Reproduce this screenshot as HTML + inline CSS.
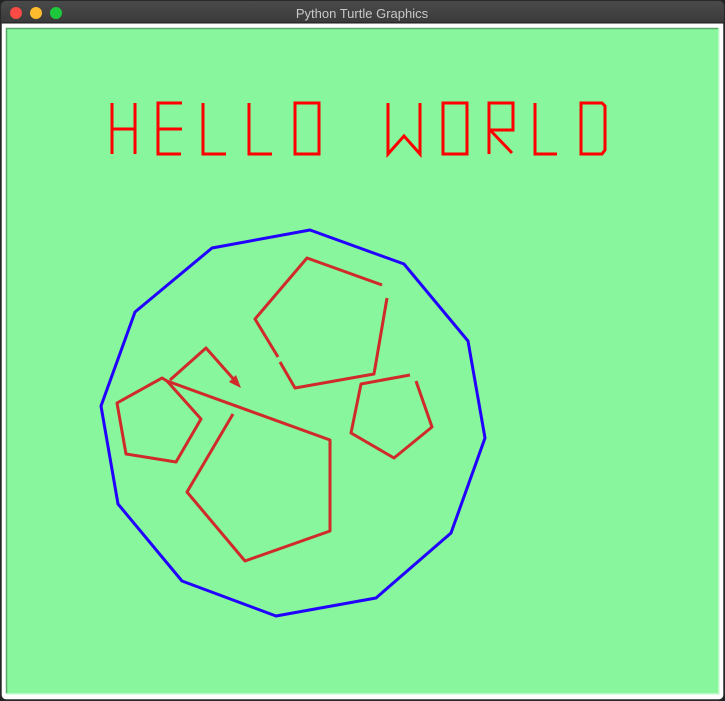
<!DOCTYPE html>
<html><head><style>
html,body{margin:0;padding:0;width:725px;height:701px;overflow:hidden;background:#1e2326;}
</style></head><body>
<svg width="725" height="701" viewBox="0 0 725 701" xmlns="http://www.w3.org/2000/svg">
<defs><linearGradient id="tb" x1="0" y1="0" x2="0" y2="1"><stop offset="0" stop-color="#4a4a4a"/><stop offset="1" stop-color="#3a3a3a"/></linearGradient></defs>
<rect x="1" y="1" width="723" height="699" rx="5" fill="#ffffff" stroke="#2a2a2a" stroke-width="1.5"/>
<path d="M1,23 V6 a5,5 0 0 1 5,-5 H719 a5,5 0 0 1 5,5 V23 Z" fill="url(#tb)"/>
<line x1="1" y1="23" x2="724" y2="23" stroke="#1a1a1a"/>
<circle cx="16" cy="13" r="6" fill="#fc4a44"/>
<circle cx="36" cy="13" r="6" fill="#fdbb2d"/>
<circle cx="56" cy="13" r="6" fill="#1dc93a"/>
<text x="362" y="18" text-anchor="middle" font-family="Liberation Sans, sans-serif" font-size="13" fill="#c8c8c8">Python Turtle Graphics</text>
<rect x="6" y="28" width="713" height="666" fill="#87f69c"/>
<path d="M6.5,693 V28.5 H718" fill="none" stroke="#5aa86c" stroke-width="1.5"/>
<path d="M7,694 H719 V29" fill="none" stroke="#d0fcd8" stroke-width="1.5"/>
<g fill="none" stroke="#ff0000" stroke-width="3" stroke-linejoin="miter">
<path d="M112,103V154M135,103V154M112,129H135"/>
<path d="M182,103H158V154H181M158,129H182"/>
<path d="M203,103V154H226"/>
<path d="M249,103V154H272"/>
<path d="M295,103H319V154H295Z"/>
<path d="M388,103V154L404,136L420,154V103"/>
<path d="M443,103H467V154H443Z"/>
<path d="M489,154V103H513V130H489"/>
<path d="M491,131L512,153"/>
<path d="M535,103V154H557"/>
<path d="M581,103H602L605,106V150L602,154H581Z"/>
</g>
<path d="M310,230L404,264L468,341L485,438L451,533L376,598L276,616L182,581L118,504L101,406L135,312L212,248Z" fill="none" stroke="#2200ff" stroke-width="3" stroke-linejoin="round"/>
<g fill="none" stroke="#d02a2a" stroke-width="3" stroke-linejoin="round">
<path d="M382,285L307,258L255,319L278,357M280,362L295,388L374,374L387,298"/>
<path d="M410,375L361,384L351,433L394,458L432,427L416,381"/>
<path d="M167,381L162,378L117,403L126,454L176,462L201,419L167,381"/>
<path d="M167,381L330,440L330,531L245,561L187,492L233,414"/>
<path d="M170,380L206,348L237,383"/>
</g>
<path d="M241,388L229,382L236,375Z" fill="#d02a2a"/>
</svg>
</body></html>
